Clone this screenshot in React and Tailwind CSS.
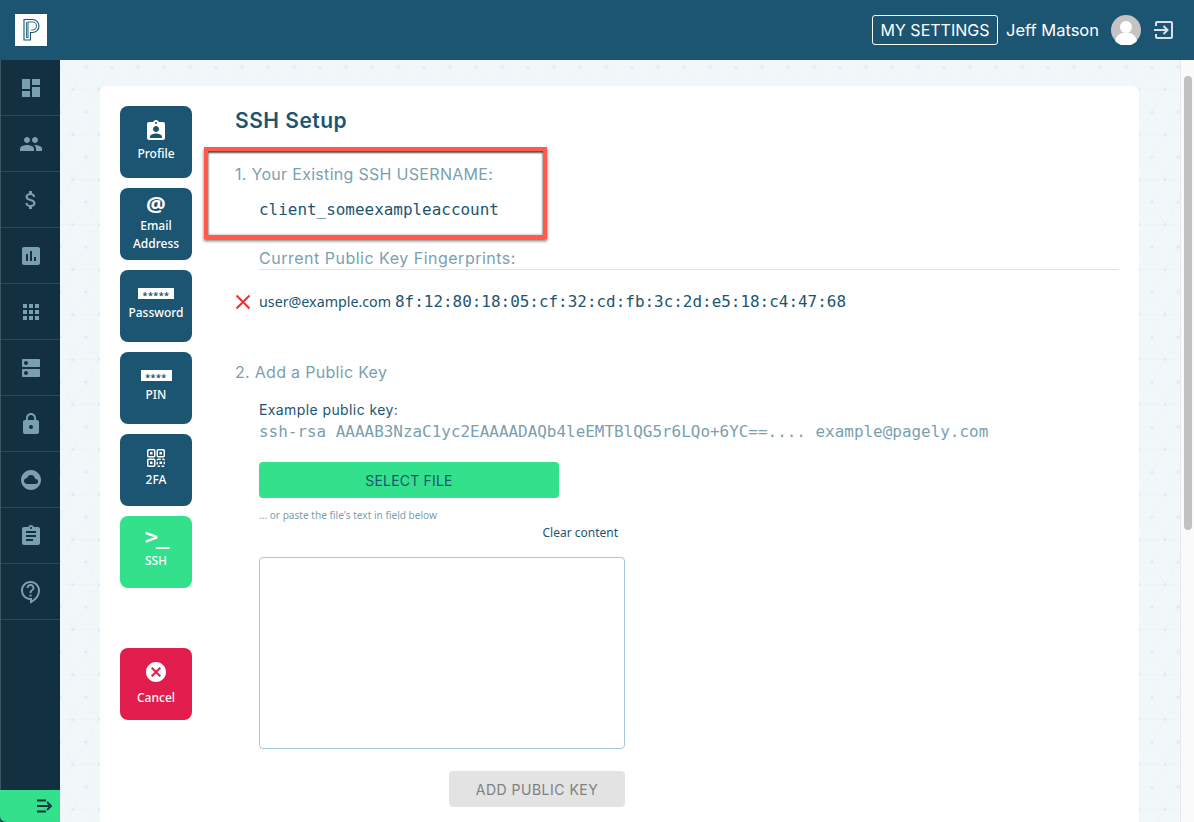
import {
    MdDashboard, MdPeople, MdAttachMoney, MdAssessment, MdApps, MdDns, MdLock, MdCloudCircle,
    MdAssignment, MdOutlineContactSupport, MdAssignmentInd, MdCancel
} from 'react-icons/md';

const navIcons = [
    MdDashboard, MdPeople, MdAttachMoney, MdAssessment, MdApps,
    MdDns, MdLock, MdCloudCircle, MdAssignment, MdOutlineContactSupport,
];

const Logo = () => (
    <svg width="32" height="32" viewBox="0 0 32 32" fill="none" stroke="#1c5571">
        <path d="M9 5.500h8.500a6.500 6.500 0 0 1 0 13h-2v7.500H9z" strokeWidth="1.100" />
        <path d="M11.500 8v15.500h1.500V8h4.500a4 4 0 0 1 0 8h-1.500" strokeWidth="1.100" stroke="#3d7390" />
    </svg>
);

const Avatar = () => (
    <svg width="30" height="30" viewBox="0 0 30 30">
        <circle cx="15" cy="15" r="15" fill="#c4c4c4" />
        <circle cx="15" cy="12" r="6" fill="#fff" />
        <path d="M4 26c1-6 6-8.500 11-8.500s10 2.500 11 8.500a15 15 0 0 1-22 0z" fill="#fff" />
    </svg>
);

const Logout = () => (
    <svg width="20" height="20" viewBox="0 0 20 20" fill="none" stroke="#d6e2e8" strokeWidth="2">
        <path d="M2 6V3a1 1 0 0 1 1-1h14a1 1 0 0 1 1 1v14a1 1 0 0 1-1 1H3a1 1 0 0 1-1-1v-3" />
        <path d="M0 10h13M9.500 6l4 4-4 4" />
    </svg>
);

const Collapse = () => (
    <svg width="16" height="14" viewBox="0 0 16 14" fill="none" stroke="#12303f" strokeWidth="1.800">
        <path d="M0 1.500h9M0 7h12M0 12.500h9M10 3l4 4-4 4" />
    </svg>
);

const QrIcon = () => (
    <svg width="20" height="20" viewBox="0 0 20 20" fill="none" stroke="#fff" strokeWidth="1.500" className="mt-[14px] mb-[3px]">
        <rect x="1.750" y="1.750" width="7" height="7" rx="1" />
        <rect x="11.250" y="1.750" width="7" height="7" rx="1" />
        <rect x="1.750" y="11.250" width="7" height="7" rx="1" />
        <rect x="11.250" y="11.250" width="7" height="7" rx="1" strokeDasharray="2.500 1.500" />
        <path d="M4 5.250h2.500M13.500 5.250h2.500M4 14.750h2.500M13.500 14.750h2.500" strokeWidth="2.500" />
    </svg>
);

const Stars = ({ count, className }) => (
    <div className={`bg-white text-[#1c5571] h-[11px] flex items-center justify-center text-[9px] leading-none tracking-[0.5px] font-bold ${className}`}>
        <span className="mt-[3px]">{count}</span>
    </div>
);

const SideButton = ({ label, children, color = 'bg-[#1c5571]', className = '' }) => (
    <div className={`${color} ${className} w-[72px] h-[72px] rounded-lg flex flex-col items-center text-white text-[12px] leading-[18px] font-medium text-center`}>
        {children}
        {label}
    </div>
);

const App = () => {
    return (
        <div className="h-screen overflow-hidden flex flex-col font-['Noto_Sans',sans-serif]">
            <header className="h-[60px] shrink-0 bg-[#1c5571] flex items-center pl-[15px] pr-[20px] font-['Inter',sans-serif] text-white">
                <div className="w-8 h-8 bg-white">
                    <Logo />
                </div>
                <div className="ml-auto border border-white rounded-[3px] h-[30px] w-[126px] flex items-center justify-center text-[16px] font-normal">
                    MY SETTINGS
                </div>
                <span className="ml-2 w-[93px] text-[16.500px] whitespace-nowrap">Jeff Matson</span>
                <div className="ml-[12px]"><Avatar /></div>
                <div className="ml-[13px]"><Logout /></div>
            </header>

            <div className="flex-1 flex min-h-0">
                <aside className="w-[60px] shrink-0 bg-[#12303f] flex flex-col border-l border-[#3c5561]">
                    {navIcons.map((Icon, i) => (
                        <div key={i} className="h-[56px] shrink-0 border-b border-[#2c4855] flex items-center justify-center text-[#7a9fb0]">
                            <Icon size={24} />
                        </div>
                    ))}
                    <div className="mt-auto h-[32px] bg-[#33e08c] -ml-px rounded-bl-md flex items-center justify-end pr-[7px]">
                        <Collapse />
                    </div>
                </aside>

                <main className="flex-1 min-w-0 relative bg-[#f2f7fa] overflow-hidden">
                    <svg className="absolute inset-0 w-full h-full" aria-hidden="true">
                        <defs>
                            <pattern id="hex" x="0" y="7" width="26" height="45" patternUnits="userSpaceOnUse">
                                <path d="M0 0h26M0 22.500h26" stroke="#edf3f7" fill="none" />
                                <path d="M0 0l13 22.500L0 45M26 0L13 22.500" stroke="#ecf3f7" fill="none" />
                                <circle cx="0" cy="0" r="1.500" fill="#dfebf2" />
                                <circle cx="26" cy="0" r="1.500" fill="#dfebf2" />
                                <circle cx="0" cy="45" r="1.500" fill="#dfebf2" />
                                <circle cx="26" cy="45" r="1.500" fill="#dfebf2" />
                                <circle cx="13" cy="22.500" r="1.500" fill="#dfebf2" />
                            </pattern>
                        </defs>
                        <rect width="100%" height="100%" fill="url(#hex)" />
                    </svg>

                    <div className="absolute top-0 right-0 bottom-0 w-[14px] bg-[#fafafa] border-l border-[#e8e8e8]">
                        <div className="absolute left-[3px] top-[16px] w-2 h-[454px] rounded bg-[#c1c1c1]" />
                    </div>

                    <div className="relative ml-[40px] mt-[26px] mr-[55px] h-[900px] bg-white rounded-md p-5 flex gap-[43px]">
                        <div className="w-[72px] shrink-0 flex flex-col gap-[10px]">
                            <SideButton label="Profile">
                                <MdAssignmentInd size={24} className="mt-[13px] mb-[2px]" />
                            </SideButton>
                            <SideButton label="Email Address" className="px-2">
                                <div className="mt-[3px] mb-[2px] h-[24px] text-[22px] leading-[24px] font-bold">@</div>
                            </SideButton>
                            <SideButton label="Password">
                                <Stars count="*****" className="w-[36px] mt-[18px] mb-[5px]" />
                            </SideButton>
                            <SideButton label="PIN">
                                <Stars count="****" className="w-[31px] mt-[18px] mb-[5px]" />
                            </SideButton>
                            <SideButton label="2FA">
                                <QrIcon />
                            </SideButton>
                            <SideButton label="SSH" color="bg-[#33e08c]">
                                <div className="mt-[9px] mb-[3px] h-[24px] text-[22px] leading-[24px] font-bold font-['DejaVu_Sans_Mono',monospace] tracking-[-2px]">&gt;_</div>
                            </SideButton>
                            <SideButton label="Cancel" color="bg-[#e11d4d]" className="mt-[50px]">
                                <MdCancel size={24} className="mt-[12px] mb-[5px]" />
                            </SideButton>
                        </div>

                        <div className="flex-1 min-w-0 text-[#1c5571]">
                            <h1 className="mt-[1px] font-['Inter',sans-serif] text-[21px] leading-[28px] font-semibold tracking-[0.5px]">SSH Setup</h1>
                            <h2 className="mt-[25px] font-['Inter',sans-serif] text-[16px] leading-[28px] tracking-[0.3px] text-[#7a9fb0]">1. Your Existing SSH USERNAME:</h2>
                            <p className="mt-[8px] ml-6 font-['DejaVu_Sans_Mono',monospace] text-[15.940px] leading-[28px]">client_someexampleaccount</p>
                            <h3 className="mt-[24px] ml-6 pb-[1px] border-b border-[#dde3e6] font-['Inter',sans-serif] text-[16px] leading-[20px] tracking-[0.5px] text-[#7a9fb0]">Current Public Key Fingerprints:</h3>
                            <div className="mt-[18px] flex items-center h-[28px]">
                                <svg width="16" height="16" viewBox="0 0 16 16" stroke="#f22f2f" strokeWidth="2" className="w-4">
                                    <path d="M1.500 1.500l13 13M14.500 1.500l-13 13" />
                                </svg>
                                <span className="ml-2 w-[132px] text-[14.250px] whitespace-nowrap">user@example.com</span>
                                <span className="ml-1 font-['DejaVu_Sans_Mono',monospace] text-[15.940px] whitespace-nowrap">8f:12:80:18:05:cf:32:cd:fb:3c:2d:e5:18:c4:47:68</span>
                            </div>
                            <h2 className="mt-[42px] font-['Inter',sans-serif] text-[16px] leading-[28px] tracking-[0.3px] text-[#7a9fb0]">2. Add a Public Key</h2>
                            <div className="ml-6">
                                <p className="mt-[14px] font-['Inter',sans-serif] text-[14px] leading-[20px] tracking-[0.4px]">Example public key:</p>
                                <p className="mt-[2px] font-['DejaVu_Sans_Mono',monospace] text-[15.940px] leading-[20px] text-[#7a9fb0] whitespace-nowrap">ssh-rsa AAAAB3NzaC1yc2EAAAADAQb4leEMTBlQG5r6LQo+6YC==.... example@pagely.com</p>
                                <div className="mt-[20px] w-[300px] h-[36px] bg-[#33e08c] rounded-sm flex items-center justify-center font-['Inter',sans-serif] text-[14px] tracking-[0.2px]">SELECT FILE</div>
                                <p className="mt-[10px] text-[10.100px] leading-[14px] text-[#7a9fb0]">... or paste the file's text in field below</p>
                                <p className="w-[359px] text-right text-[12px] leading-[18px] mt-[2px]">Clear content</p>
                                <div className="mt-[15px] w-[366px] h-[192px] border border-[#a5c8e0] rounded" />
                                <div className="mt-[22px] ml-[190px] w-[176px] h-[36px] bg-[#e3e3e3] rounded-sm flex items-center justify-center font-['Inter',sans-serif] text-[14px] tracking-[0.5px] text-[#808080]">ADD PUBLIC KEY</div>
                            </div>
                        </div>

                        <div className="absolute left-[104px] top-[61px] w-[343px] h-[92px] border-[4px] border-[#ff5a4d] shadow-[0_2px_3px_rgba(0,0,0,0.55),inset_0_2px_2px_rgba(0,0,0,0.65),inset_0_0_3px_rgba(0,0,0,0.35)]" />
                    </div>
                </main>
            </div>
        </div>
    );
};

export default App;
